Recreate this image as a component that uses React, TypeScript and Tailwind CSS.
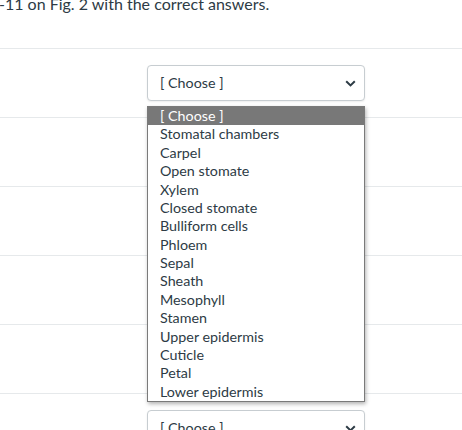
import React from "react";

const options = [
  "[ Choose ]",
  "Stomatal chambers",
  "Carpel",
  "Open stomate",
  "Xylem",
  "Closed stomate",
  "Bulliform cells",
  "Phloem",
  "Sepal",
  "Sheath",
  "Mesophyll",
  "Stamen",
  "Upper epidermis",
  "Cuticle",
  "Petal",
  "Lower epidermis",
];

const Chevron = () => (
  <svg width="11" height="7" viewBox="0 0 11 7" className="shrink-0">
    <path d="M1.2 1.2 L5.5 5.4 L9.8 1.2" fill="none" stroke="#2d3b45" strokeWidth="2" />
  </svg>
);

const SelectBox = () => (
  <div className="ml-[147px] w-[218px] h-[36px] flex items-center justify-between pl-[12px] pr-[8px] border border-[#c7cdd1] rounded-[4px] bg-white shadow-[0_1px_2px_rgba(0,0,0,0.08)]">
    <span className="text-[14.3px] text-[#2d3b45]">[ Choose ]</span>
    <Chevron />
  </div>
);

export default function App() {
  return (
    <div
      className="relative w-[462px] h-[430px] overflow-hidden bg-white text-[#2d3b45]"
      style={{ fontFamily: "Lato, 'Noto Sans', sans-serif" }}
    >
      <p className="mt-[-8px] ml-[-1px] text-[16px] leading-[24px] whitespace-nowrap">
        -11 on Fig. 2 with the correct answers.
      </p>

      <div className="mt-[32px]">
        {[0, 1, 2, 3, 4, 5].map((i) => (
          <div key={i} className="h-[69px] border-t border-[#e6e9eb] pt-[16px]">
            {(i === 0 || i === 5) && <SelectBox />}
          </div>
        ))}
      </div>

      {/* open dropdown list */}
      <ul className="absolute left-[147px] top-[106px] w-[218px] bg-white border border-[#7a7a7a] shadow-[1px_2px_4px_rgba(0,0,0,0.3)]">
        {options.map((opt, i) => (
          <li
            key={opt}
            className={
              i === 0
                ? "h-[18.375px] leading-[18.375px] pl-[12px] text-[14.3px] bg-[#787878] text-white"
                : "h-[18.375px] leading-[18.375px] pl-[12px] text-[14.3px] text-[#2d3b45]"
            }
          >
            {opt}
          </li>
        ))}
      </ul>
    </div>
  );
}
